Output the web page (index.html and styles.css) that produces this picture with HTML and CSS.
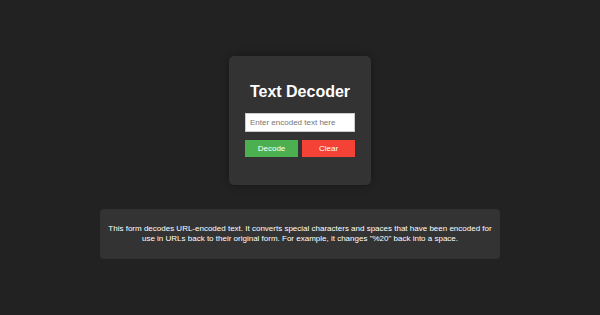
FILE: index.html
```html
<!DOCTYPE html>
<html>
<head>
<meta charset="utf-8">
<link rel="stylesheet" href="styles.css">
</head>
<body>
<main class="page">
  <section class="card">
    <h1 class="title">Text Decoder</h1>
    <input class="field" type="text" placeholder="Enter encoded text here">
    <div class="actions">
      <button class="btn btn-decode">Decode</button>
      <button class="btn btn-clear">Clear</button>
    </div>
  </section>
  <section class="info">
    <p>This form decodes URL-encoded text. It converts special characters and spaces that have been encoded for use in URLs back to their original form. For example, it changes "%20" back into a space.</p>
  </section>
</main>
</body>
</html>
```
FILE: styles.css
```css
html, body {
  margin: 0;
  padding: 0;
  background: #222222;
  font-family: "Liberation Sans", Arial, sans-serif;
  color: #ffffff;
}
.page {
  width: 600px;
  height: 315px;
  display: flex;
  flex-direction: column;
  align-items: center;
  justify-content: center;
  gap: 24px;
}
.card {
  box-sizing: border-box;
  width: 142px;
  height: 129px;
  background: #333333;
  border-radius: 5px;
  box-shadow: 0 0 8px rgba(0, 0, 0, 0.35);
  padding: 26px 16px 0;
  display: flex;
  flex-direction: column;
  align-items: center;
}
.title {
  margin: 0;
  font-size: 16px;
  line-height: 19px;
  font-weight: bold;
  white-space: nowrap;
}
.field {
  box-sizing: border-box;
  width: 110px;
  height: 19px;
  margin-top: 12px;
  border: 1px solid #cccccc;
  background: #ffffff;
  padding: 0 4px;
  font-family: inherit;
  font-size: 8px;
  outline: none;
}
.field::placeholder {
  color: #757575;
}
.actions {
  display: flex;
  gap: 4px;
  margin-top: 8px;
}
.btn {
  width: 53px;
  height: 17px;
  border: none;
  padding: 0;
  color: #ffffff;
  font-family: inherit;
  font-size: 8px;
}
.btn-decode { background: #4caf50; }
.btn-clear { background: #f44336; }
.info {
  box-sizing: border-box;
  width: 400px;
  height: 50px;
  background: #333333;
  border-radius: 4px;
  padding: 0 6px;
  display: flex;
  align-items: center;
  justify-content: center;
}
.info p {
  margin: 0;
  font-size: 8px;
  line-height: 10px;
  text-align: center;
  color: #ffffff;
}
```
